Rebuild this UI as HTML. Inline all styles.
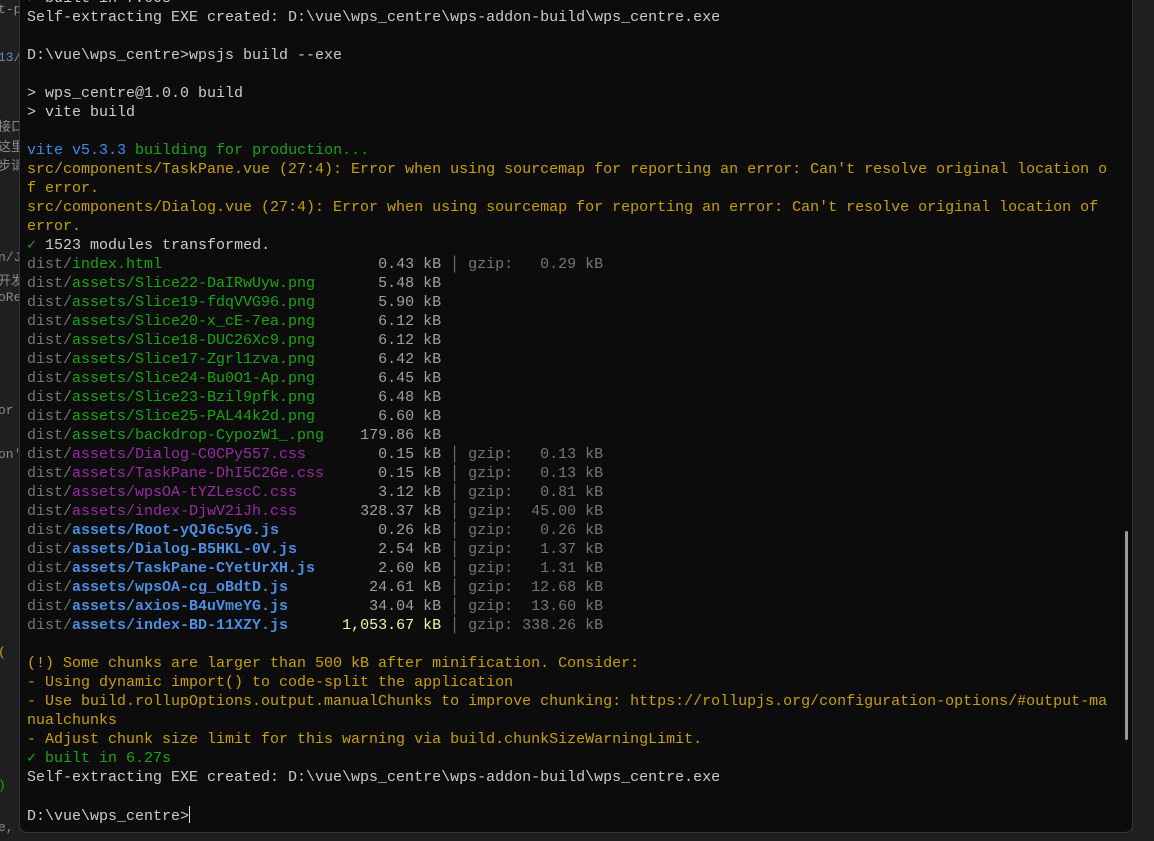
<!DOCTYPE html>
<html><head><meta charset="utf-8"><style>
html,body{margin:0;padding:0;width:1154px;height:841px;overflow:hidden;background:#202020;}
.left{position:absolute;left:0;top:0;width:19px;height:841px;background:#1f1f1f;font:13px "Liberation Mono","Noto Sans CJK SC",monospace;color:#8a8a8a;overflow:hidden;}
.left div{position:absolute;left:-2px;white-space:nowrap;}
.term{position:absolute;left:19px;top:-10px;width:1112px;height:841px;background:#0c0c0c;border:1px solid #353535;border-radius:0 0 8px 8px;overflow:hidden;}
pre{position:absolute;left:7px;top:-2px;margin:0;font:15px/19px "Liberation Mono",monospace;color:#cccccc;white-space:pre;}
.g{color:#767676}.gr{color:#16a60e}.y{color:#c8a000}.b{color:#3b8eea}.m{color:#9a2aa6}.bb{color:#4a8fe0;font-weight:bold}.s{color:#a0a0a0}.yy{color:#f9f1a5}
.sb{position:absolute;left:1125px;top:531px;width:3px;height:209px;background:#9a9a9a;border-radius:2px;}
.cur{display:inline-block;width:1px;height:17px;background:#ddd;vertical-align:-3px;}
</style></head><body>
<div class="left">
<div style="top:2px">t-p</div>
<div style="top:50px;color:#6a8ab0">13/</div>
<div style="top:116px">接口</div>
<div style="top:136px">这里</div>
<div style="top:155px">步请</div>
<div style="top:250px">n/J</div>
<div style="top:270px">开发</div>
<div style="top:290px">oRe</div>
<div style="top:403px">or</div>
<div style="top:447px">on'</div>
<div style="top:645px;color:#c8a000">(</div>
<div style="top:778px;color:#16a60e">)</div>
<div style="top:820px">e,</div>
</div>
<div class="term">
<pre><span class="gr">✓</span> built in 7.60s
Self-extracting EXE created: D:\vue\wps_centre\wps-addon-build\wps_centre.exe

D:\vue\wps_centre>wpsjs build --exe

&gt; wps_centre@1.0.0 build
&gt; vite build

<span class="b">vite v5.3.3</span> <span class="gr">building for production...</span>
<span class="y">src/components/TaskPane.vue (27:4): Error when using sourcemap for reporting an error: Can't resolve original location o</span>
<span class="y">f error.</span>
<span class="y">src/components/Dialog.vue (27:4): Error when using sourcemap for reporting an error: Can't resolve original location of</span>
<span class="y">error.</span>
<span class="gr">✓</span> 1523 modules transformed.
<span class="g">dist/</span><span class="gr">index.html</span>                        <span class="s">0.43 kB</span> <span class="g">│ gzip:   0.29 kB</span>
<span class="g">dist/</span><span class="gr">assets/Slice22-DaIRwUyw.png</span>       <span class="s">5.48 kB</span>
<span class="g">dist/</span><span class="gr">assets/Slice19-fdqVVG96.png</span>       <span class="s">5.90 kB</span>
<span class="g">dist/</span><span class="gr">assets/Slice20-x_cE-7ea.png</span>       <span class="s">6.12 kB</span>
<span class="g">dist/</span><span class="gr">assets/Slice18-DUC26Xc9.png</span>       <span class="s">6.12 kB</span>
<span class="g">dist/</span><span class="gr">assets/Slice17-Zgrl1zva.png</span>       <span class="s">6.42 kB</span>
<span class="g">dist/</span><span class="gr">assets/Slice24-Bu0O1-Ap.png</span>       <span class="s">6.45 kB</span>
<span class="g">dist/</span><span class="gr">assets/Slice23-Bzil9pfk.png</span>       <span class="s">6.48 kB</span>
<span class="g">dist/</span><span class="gr">assets/Slice25-PAL44k2d.png</span>       <span class="s">6.60 kB</span>
<span class="g">dist/</span><span class="gr">assets/backdrop-CypozW1_.png</span>    <span class="s">179.86 kB</span>
<span class="g">dist/</span><span class="m">assets/Dialog-C0CPy557.css</span>        <span class="s">0.15 kB</span> <span class="g">│ gzip:   0.13 kB</span>
<span class="g">dist/</span><span class="m">assets/TaskPane-DhI5C2Ge.css</span>      <span class="s">0.15 kB</span> <span class="g">│ gzip:   0.13 kB</span>
<span class="g">dist/</span><span class="m">assets/wpsOA-tYZLescC.css</span>         <span class="s">3.12 kB</span> <span class="g">│ gzip:   0.81 kB</span>
<span class="g">dist/</span><span class="m">assets/index-DjwV2iJh.css</span>       <span class="s">328.37 kB</span> <span class="g">│ gzip:  45.00 kB</span>
<span class="g">dist/</span><span class="bb">assets/Root-yQJ6c5yG.js</span>           <span class="s">0.26 kB</span> <span class="g">│ gzip:   0.26 kB</span>
<span class="g">dist/</span><span class="bb">assets/Dialog-B5HKL-0V.js</span>         <span class="s">2.54 kB</span> <span class="g">│ gzip:   1.37 kB</span>
<span class="g">dist/</span><span class="bb">assets/TaskPane-CYetUrXH.js</span>       <span class="s">2.60 kB</span> <span class="g">│ gzip:   1.31 kB</span>
<span class="g">dist/</span><span class="bb">assets/wpsOA-cg_oBdtD.js</span>         <span class="s">24.61 kB</span> <span class="g">│ gzip:  12.68 kB</span>
<span class="g">dist/</span><span class="bb">assets/axios-B4uVmeYG.js</span>         <span class="s">34.04 kB</span> <span class="g">│ gzip:  13.60 kB</span>
<span class="g">dist/</span><span class="bb">assets/index-BD-11XZY.js</span>      <span class="yy">1,053.67 kB</span> <span class="g">│ gzip: 338.26 kB</span>

<span class="y">(!) Some chunks are larger than 500 kB after minification. Consider:</span>
<span class="y">- Using dynamic import() to code-split the application</span>
<span class="y">- Use build.rollupOptions.output.manualChunks to improve chunking: https://rollupjs.org/configuration-options/#output-ma</span>
<span class="y">nualchunks</span>
<span class="y">- Adjust chunk size limit for this warning via build.chunkSizeWarningLimit.</span>
<span class="gr">✓ built in 6.27s</span>
Self-extracting EXE created: D:\vue\wps_centre\wps-addon-build\wps_centre.exe

D:\vue\wps_centre&gt;<span class="cur"></span></pre>
</div>
<div class="sb"></div>
</body></html>
